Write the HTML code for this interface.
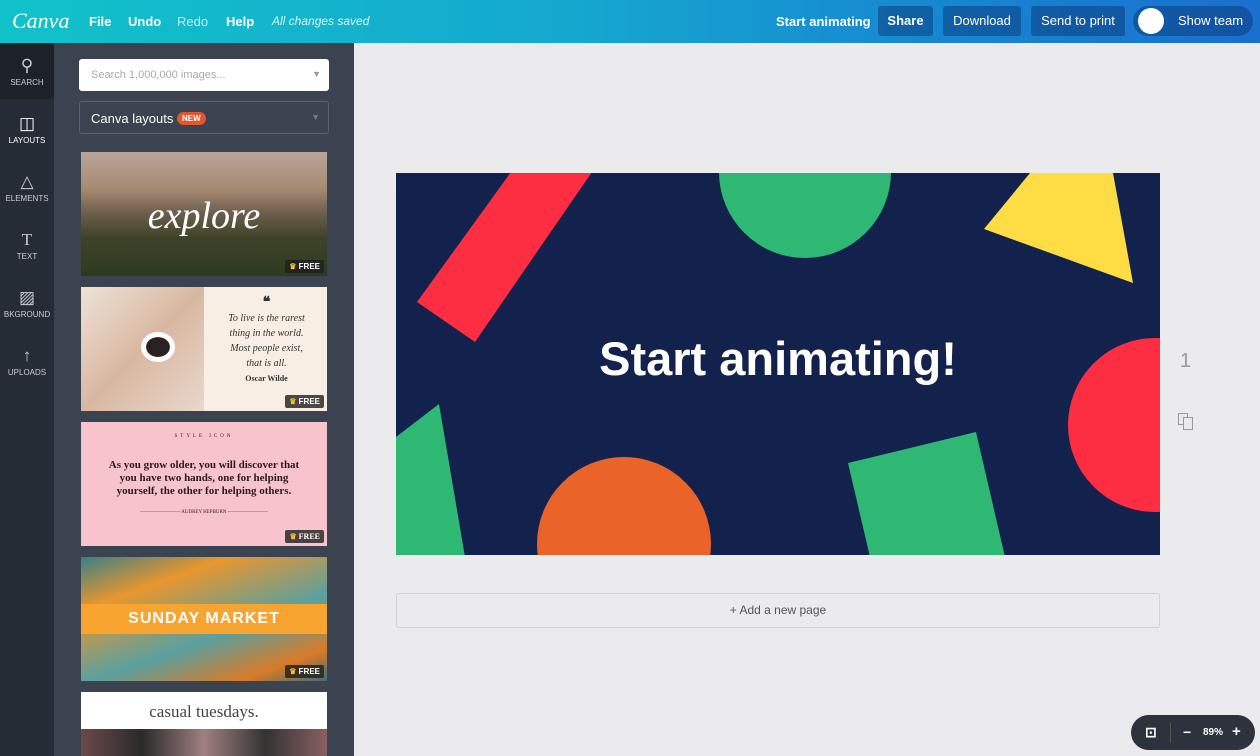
<!DOCTYPE html>
<html><head><meta charset="utf-8"><style>
*{margin:0;padding:0;box-sizing:border-box}
body{width:1260px;height:756px;overflow:hidden;background:#ebebed;font-family:"Liberation Sans",sans-serif;position:relative}
.hdr{position:absolute;left:0;top:0;width:1260px;height:43px;background:linear-gradient(90deg,#11c2c9 0%,#15a8cf 45%,#1786d0 75%,#1a6fce 100%);color:#fff}
.hdr span{position:absolute;top:14px;font-size:13px;font-weight:bold}
.btn{position:absolute;top:6px;height:30px;background:rgba(10,55,120,.5);border-radius:3px;color:#fff;font-size:13px;font-weight:bold;text-align:center;line-height:30px}
.side{position:absolute;left:0;top:43px;width:54px;height:713px;background:#262c35}
.tab{position:absolute;left:0;width:54px;height:56px;color:#c8ccd2;font-size:8px;text-align:center}
.tab b{display:block;font-size:17px;font-weight:normal;height:35px;padding-top:14px;line-height:17px}
.panel{position:absolute;left:54px;top:43px;width:300px;height:713px;background:#3a434f}
.th{position:absolute;left:81px;width:246px;overflow:hidden}
.free{position:absolute;right:3px;bottom:3px;background:rgba(30,30,30,.8);color:#fff;font-size:8px;font-weight:bold;padding:2px 4px;border-radius:2px}
.free:before{content:"♛ ";color:#f5c12a}
</style></head><body>
<div class="hdr">
<span style="left:12px;top:8px;font-family:'Liberation Serif',serif;font-style:italic;font-size:22px;font-weight:normal">Canva</span>
<span style="left:89px">File</span><span style="left:128px">Undo</span><span style="left:177px;color:#b8eef2;font-weight:normal">Redo</span><span style="left:226px">Help</span>
<span style="left:272px;font-style:italic;font-weight:normal;font-size:12px;color:#d8f6f8">All changes saved</span>
<span style="left:776px">Start animating</span>
</div>
<div class="btn" style="left:878px;width:55px">Share</div>
<div class="btn" style="left:943px;width:78px;font-weight:normal">Download</div>
<div class="btn" style="left:1031px;width:94px;font-weight:normal">Send to print</div>
<div class="btn" style="left:1133px;width:120px;border-radius:15px;text-align:left;padding-left:45px;font-weight:normal">Show team</div>
<div style="position:absolute;left:1138px;top:8px;width:26px;height:26px;border-radius:50%;background:#fff"></div>

<div class="side">
<div class="tab" style="top:0;background:#1d2229;border-radius:0 4px 4px 0"><b>⚲</b>SEARCH</div>
<div class="tab" style="top:58px;color:#fff"><b>◫</b>LAYOUTS</div>
<div class="tab" style="top:116px"><b>△</b>ELEMENTS</div>
<div class="tab" style="top:174px"><b style="font-family:'Liberation Serif'">T</b>TEXT</div>
<div class="tab" style="top:232px"><b>▨</b>BKGROUND</div>
<div class="tab" style="top:290px"><b>↑</b>UPLOADS</div>
</div>
<div class="panel"></div>
<div style="position:absolute;left:79px;top:59px;width:250px;height:32px;background:#fff;border-radius:3px;font-size:11px;color:#aaa;padding:10px 12px">Search 1,000,000 images...<span style="position:absolute;right:8px;top:10px;font-size:9px;color:#999">▼</span></div>
<div style="position:absolute;left:79px;top:101px;width:250px;height:33px;border:1px solid #5a626d;border-radius:3px;color:#fff;font-size:13px;padding:9px 11px">Canva layouts <span style="background:#e4572e;border-radius:8px;font-size:8px;font-weight:bold;padding:2px 5px;vertical-align:2px">NEW</span><span style="position:absolute;right:8px;top:10px;font-size:9px;color:#777">▼</span></div>

<div class="th" style="top:152px;height:124px;background:linear-gradient(180deg,#b9a59a 0%,#a58a70 30%,#6b5d4b 50%,#3d4228 70%,#2c3a20 100%)"><div style="position:absolute;left:0;top:42px;width:246px;text-align:center;color:#fff;font-family:'Liberation Serif',serif;font-style:italic;font-size:38px">explore</div><div class="free">FREE</div></div>
<div class="th" style="top:287px;height:124px;background:#f8eee4"><div style="position:absolute;left:0;top:0;width:123px;height:124px;background:linear-gradient(135deg,#efe2d8,#d9b8a2 50%,#e8d8cc)"></div><div style="position:absolute;left:60px;top:45px;width:34px;height:30px;border-radius:50%;background:#fff;border:5px solid #fff;box-shadow:inset 0 0 0 20px #2a2220"></div><div style="position:absolute;left:125px;top:8px;width:121px;text-align:center;font-family:'Liberation Serif',serif;font-style:italic;font-size:10px;line-height:15px;color:#333"><b style="font-style:normal;font-size:14px">❝</b><br>To live is the rarest<br>thing in the world.<br>Most people exist,<br>that is all.<br><b style="font-style:normal;font-size:8px">Oscar Wilde</b></div><div class="free">FREE</div></div>
<div class="th" style="top:422px;height:124px;background:#f7c3cc;font-family:'Liberation Serif',serif;text-align:center;color:#2a1a1a"><div style="font-size:5px;letter-spacing:3px;margin-top:12px">STYLE ICON</div><div style="font-size:11px;font-weight:bold;line-height:13px;margin-top:20px">As you grow older, you will discover that<br>you have two hands, one for helping<br>yourself, the other for helping others.</div><div style="font-size:5px;margin-top:12px">———————— AUDREY HEPBURN ————————</div><div class="free">FREE</div></div>
<div class="th" style="top:557px;height:124px;background:linear-gradient(160deg,#3a7f86 0%,#e9962e 25%,#5aa0a0 60%,#d97a28 85%,#3d6f75)"><div style="position:absolute;left:0;top:47px;width:246px;height:30px;background:#f7a431;color:#fff;font-size:16px;font-weight:bold;text-align:center;line-height:30px;letter-spacing:1px">SUNDAY MARKET</div><div class="free">FREE</div></div>
<div class="th" style="top:692px;height:64px;background:#fff"><div style="height:37px;text-align:center;font-family:'Liberation Serif',serif;font-size:17px;line-height:40px;color:#444">casual tuesdays.</div><div style="height:27px;background:linear-gradient(90deg,#6b4a4a,#2a2a2a,#a08080,#333,#8a6060)"></div></div>

<svg style="position:absolute;left:396px;top:173px" width="764" height="382" viewBox="0 0 764 382">
<rect width="764" height="382" fill="#13224c"/>
<circle cx="409" cy="-1" r="86" fill="#2eb873"/>
<polygon points="115,-1 196,-1 79,169 21,129" fill="#fd2d42"/>
<polygon points="588,56 634,0 717,0 737,110" fill="#fedc44"/>
<circle cx="759" cy="252" r="87" fill="#fd2d42"/>
<polygon points="0,264 43,231 69,384 0,384" fill="#2eb873"/>
<circle cx="228" cy="371" r="87" fill="#ea6329"/>
<polygon points="452,290 580,259 609,384 474,384" fill="#2eb873"/>
<text x="382" y="202" text-anchor="middle" fill="#fff" font-family="Liberation Sans" font-weight="bold" font-size="47">Start animating!</text>
</svg>
<div style="position:absolute;left:1180px;top:350px;color:#999;font-size:20px">1</div>
<div style="position:absolute;left:1178px;top:413px;width:10px;height:12px;border:1px solid #999"></div>
<div style="position:absolute;left:1183px;top:417px;width:10px;height:13px;border:1px solid #999;background:#ebebed"></div>
<div style="position:absolute;left:396px;top:593px;width:764px;height:35px;border:1px solid #d2d2d6;border-radius:3px;text-align:center;line-height:33px;font-size:12px;color:#555">+ Add a new page</div>
<div style="position:absolute;left:1131px;top:715px;width:124px;height:35px;background:#2d333c;border-radius:18px;color:#fff;font-size:10px;font-weight:bold">
<span style="position:absolute;left:14px;top:9px;font-size:14px">⊡</span>
<span style="position:absolute;left:39px;top:8px;width:1px;height:20px;background:#555"></span>
<span style="position:absolute;left:52px;top:9px;font-size:14px">−</span>
<span style="position:absolute;left:72px;top:12px">89%</span>
<span style="position:absolute;left:101px;top:8px;font-size:15px">+</span>
</div>
</body></html>
